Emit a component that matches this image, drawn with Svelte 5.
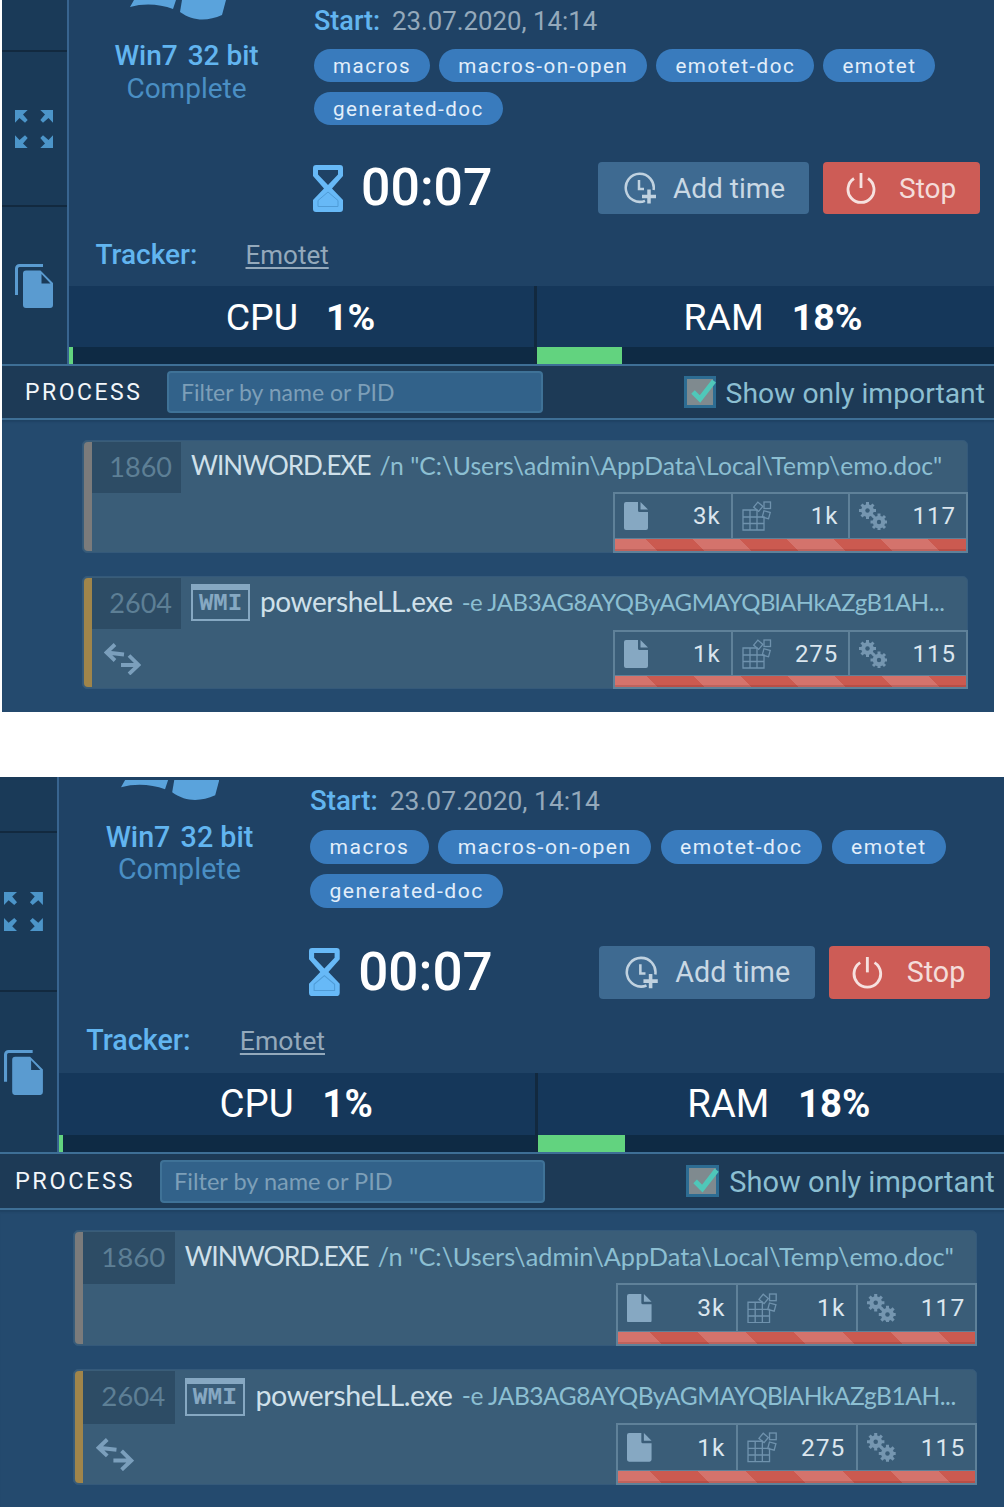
<script>
  const tags = ['macros', 'macros-on-open', 'emotet-doc', 'emotet', 'generated-doc'];
  const procs = [
    { pid: '1860', cls: 'grey', name: 'WINWORD.EXE', args: '/n "C:\\Users\\admin\\AppData\\Local\\Temp\\emo.doc"', wmi: false, net: false, stats: ['3k', '1k', '117'] },
    { pid: '2604', cls: 'gold', name: 'powersheLL.exe', args: '-e JAB3AG8AYQByAGMAYQBlAHkAZgB1AH...', wmi: true, net: true, stats: ['1k', '275', '115'] }
  ];
</script>

{#snippet gears()}
  <svg class="ic-gear" viewBox="0 0 28 28" aria-hidden="true">
    <g fill="#7596b0">
      <circle cx="8.500" cy="8.500" r="6.300"/>
      <circle cx="20" cy="20" r="6.300"/>
      <g stroke="#7596b0" stroke-width="3">
        <path d="M8.500 0v17M0 8.500h17M2.500 2.500l12 12M14.500 2.500l-12 12"/>
        <path d="M20 11.500v16.500M11.500 20h16.500M14 14l12 12M26 14l-12 12"/>
      </g>
    </g>
    <circle cx="8.500" cy="8.500" r="2.200" fill="#3a5d78"/>
    <circle cx="20" cy="20" r="2.200" fill="#3a5d78"/>
  </svg>
{/snippet}

{#snippet registry()}
  <svg class="ic-reg" viewBox="0 0 30 30" fill="none" stroke="#6f92ad" stroke-width="1.300" aria-hidden="true">
    <path d="M1 9h14v7h7v13H1zM1 16h14M1 22.500h21M8 9v20M15 16v13"/>
    <rect x="13" y="2.500" width="6.500" height="6.500" transform="rotate(40 16.250 5.750)"/>
    <rect x="22" y="1" width="6.500" height="6.500"/>
    <rect x="21" y="10.500" width="6.500" height="6.500" transform="rotate(15 24.250 13.750)"/>
  </svg>
{/snippet}

{#snippet panel(variant)}
  <section class="panel {variant}">
    <div class="upper">
      <aside class="side">
        <div class="s1"></div>
        <div class="s2">
          <svg class="ic-expand" viewBox="0 0 38 38" aria-hidden="true">
            <g fill="#4c95c9">
              <path d="M0 0h12.700L8 4.500l4.700 5.500-2.700 2.700L4.500 8 0 12.700z"/>
              <path d="M38 0H25.300L30 4.500 25.300 10l2.700 2.700L33.500 8l4.500 4.700z"/>
              <path d="M0 38h12.700L8 33.500l4.700-5.500-2.700-2.700L4.500 30 0 25.300z"/>
              <path d="M38 38H25.300l4.700-4.500-4.700-5.500 2.700-2.700 5.500 4.700 4.500-4.700z"/>
            </g>
          </svg>
        </div>
        <div class="s3">
          <svg class="ic-copy" viewBox="0 0 38 44" aria-hidden="true">
            <path d="M1.500 31V4.500a3 3 0 0 1 3-3H28" fill="none" stroke="#5a9bd0" stroke-width="3"/>
            <path d="M11 6.500h14.500L38 19v22a3 3 0 0 1-3 3H11a3 3 0 0 1-3-3V9.500a3 3 0 0 1 3-3z" fill="#5a9bd0"/>
            <path d="M26.500 10v9.500h9z" fill="#1a3a58"/>
          </svg>
        </div>
      </aside>
      <div class="main">
        <div class="info">
          <div class="summary">
            <div class="os">
              <svg class="logo" viewBox="0 0 96 21" aria-hidden="true">
                <path d="M4 0h42l-3 9C30 4 14 3 0 7z" fill="#5aa3dc"/>
                <path d="M52 0h44l-4 15c-14 6-28 7-42-3z" fill="#5aa3dc"/>
              </svg>
              <div class="os-name">Win7<span class="gap"></span> 32 bit</div>
              <div class="os-state">Complete</div>
            </div>
            <div class="run">
              <div class="start"><b>Start:</b> <span>23.07.2020, 14:14</span></div>
              <div class="tags">
                {#each tags as t}<span class="tag">{t}</span>{/each}
              </div>
              <div class="timer-row">
                <svg class="hourglass" viewBox="0 0 30 47" aria-hidden="true">
                  <path fill-rule="evenodd" fill="#67b9f7" d="M3 0h24a3 3 0 0 1 3 3v8L19 23.500 30 35v9a3 3 0 0 1-3 3H3a3 3 0 0 1-3-3v-9l11-11.500L0 11V3a3 3 0 0 1 3-3zM5 5v4.500L15 20l10-10.500V5z"/>
                  <path d="M5 41.500v-6L15 27l10 8.500v6z" fill="none" stroke="#4f9bd6" stroke-width="1"/>
                </svg>
                <div class="clock">00:07</div>
                <button class="btn add">
                  <svg class="ic-btn" viewBox="0 0 32 32" aria-hidden="true" fill="none" stroke="#c0d2e0">
                    <path d="M21 28.800A14 14 0 1 1 29.600 18" stroke-width="2.500"/>
                    <path d="M15 8v9h5" stroke-width="2.500"/>
                    <path d="M25 17.500v14M18 24.500h14" stroke-width="3.500"/>
                  </svg>
                  <span>Add time</span>
                </button>
                <button class="btn stop">
                  <svg class="ic-btn" viewBox="0 0 30 32" aria-hidden="true" fill="none" stroke="#f6e1df" stroke-width="2.800">
                    <path d="M8 6.500a13 13 0 1 0 14 0"/>
                    <path d="M15 1v15"/>
                  </svg>
                  <span>Stop</span>
                </button>
              </div>
            </div>
          </div>
          <div class="tracker"><b>Tracker:</b> <a href="#emotet">Emotet</a></div>
        </div>
        <div class="metrics">
          <div class="metric cpu">
            <div class="m-text">CPU <b>1%</b></div>
            <div class="m-bar"><i style="width:0.9%"></i></div>
          </div>
          <div class="metric ram">
            <div class="m-text">RAM <b>18%</b></div>
            <div class="m-bar"><i style="width:18.600%"></i></div>
          </div>
        </div>
      </div>
    </div>
    <div class="filter">
      <div class="f-title">PROCESS</div>
      <input class="f-input" placeholder="Filter by name or PID" />
      <label class="f-check">
        <span class="box">
          <svg viewBox="0 0 30 30" aria-hidden="true"><path d="M6 16l7 7L27 5" fill="none" stroke="#4fc7b9" stroke-width="5"/></svg>
        </span>
        <span class="f-label">Show only important</span>
      </label>
    </div>
    <div class="list">
      {#each procs as p}
        <article class="proc {p.cls}">
          <div class="stripe"></div>
          <div class="p-body">
            <div class="p-top">
              <div class="pid">{p.pid}</div>
              <div class="cmd">
                {#if p.wmi}<span class="wmi">WMI</span>{/if}
                <span class="p-name">{p.name}</span>
                <span class="p-args">{p.args}</span>
              </div>
            </div>
            <div class="p-bottom">
              <div class="p-flags">
                {#if p.net}
                  <svg class="ic-net" viewBox="0 0 37 32" fill="none" stroke="#7b9fbc" stroke-width="3.800" aria-hidden="true">
                    <path d="M11 1.500L2.500 9.500l8.500 8M2.500 9.500L20 11.500"/>
                    <path d="M25 12.500l9.500 9.500-9.500 9M34.500 22H17"/>
                  </svg>
                {/if}
              </div>
              <div class="stats">
                <div class="cells">
                  <div class="cell">
                    <svg class="ic-doc" viewBox="0 0 24 28" aria-hidden="true">
                      <path d="M2 0h12v8.500a1.500 1.500 0 0 0 1.500 1.500H24v16a2 2 0 0 1-2 2H2a2 2 0 0 1-2-2V2a2 2 0 0 1 2-2z" fill="#86a8c2"/>
                      <path d="M16.500 0L24 7.500h-7.500z" fill="#86a8c2"/>
                    </svg>
                    <span>{p.stats[0]}</span>
                  </div>
                  <div class="cell">{@render registry()}<span>{p.stats[1]}</span></div>
                  <div class="cell">{@render gears()}<span>{p.stats[2]}</span></div>
                </div>
                <div class="meter"></div>
              </div>
            </div>
          </div>
        </article>
      {/each}
    </div>
  </section>
{/snippet}

<div class="page">
  {@render panel('a')}
  {@render panel('b')}
</div>

<style>
  :global(body) { margin: 0; background: #fff; }
  .page { width: 1008px; height: 1508px; overflow: hidden; font-family: Roboto, "Liberation Sans", sans-serif; }
  .panel { display: flex; flex-direction: column; background: #244a6e; overflow: hidden; }
  .panel.a { --t: 0px; --side: 65px; --title: 165px; --title-pad: 23px; --list-pad: 80px; --stats: 355px; width: 992px; height: 712px; margin-left: 2px; }
  .panel.b { --t: 2.600px; --side: 55.800px; --title: 156px; --title-pad: 14.600px; --list-pad: 71.500px; --stats: 353px; width: 980.500px; height: 712.900px; margin-top: 63.500px; zoom: 1.024; }

  .upper { display: flex; height: calc(364px + var(--t)); flex: none; }
  .side { width: var(--side); flex: none; background: #1a3a58; display: flex; flex-direction: column; box-sizing: border-box; }
  .s1 { height: calc(52px + var(--t)); border-bottom: 2px solid #12293f; box-sizing: border-box; }
  .s2 { height: 155px; border-bottom: 2px solid #12293f; box-sizing: border-box; display: flex; justify-content: flex-end; padding: 58px 14px 0 0; }
  .s3 { flex: 1; display: flex; justify-content: flex-end; padding: 57px 14px 0 0; }
  .ic-expand { width: 38px; height: 38px; }
  .ic-copy { width: 38px; height: 44px; }

  .main { flex: 1; border-left: 2px solid #38648f; display: flex; flex-direction: column; min-width: 0; }
  .info { height: calc(286px + var(--t)); background: #1f4265; padding-top: var(--t); box-sizing: border-box; display: flex; flex-direction: column; }
  .summary { display: flex; height: 232px; }
  .os { width: 245px; flex: none; box-sizing: border-box; padding-right: 10px; display: flex; flex-direction: column; align-items: center; }
  .logo { width: 96px; height: 21px; margin-left: -18px; flex: none; }
  .os-name { margin-top: 19px; font-size: 28px; line-height: 32px; font-weight: 500; color: #62b5f0; white-space: nowrap; }
  .gap { display: inline-block; width: 3px; }
  .os-state { font-size: 28px; line-height: 33px; color: #4a8fc4; }

  .run { flex: 1; padding-right: 14px; min-width: 0; }
  .start { height: 38px; padding-top: 4px; box-sizing: border-box; font-size: 27px; line-height: 34px; white-space: nowrap; }
  .start b { font-weight: 500; color: #62b5f0; }
  .start span { color: #94a9bb; font-size: 25.800px; margin-left: 5px; }
  .tags { display: flex; flex-wrap: wrap; gap: 10px 9.300px; margin-top: 11px; }
  .tag { height: 33px; line-height: 34px; padding: 0 19px; border-radius: 17px; background: #397bbd; color: #e2eefa; font-size: 20.600px; letter-spacing: 1.470px; white-space: nowrap; }
  .timer-row { display: flex; align-items: center; height: 52px; margin-top: 37px; }
  .hourglass { width: 30px; height: 47px; flex: none; margin-left: -1px; }
  .clock { flex: 1; margin-left: 18px; font-size: 51.800px; line-height: 52px; font-weight: 500; color: #fff; }
  .btn { height: 52px; border: 0; border-radius: 4px; padding: 0; display: flex; align-items: center; font-family: inherit; font-size: 28px; box-sizing: border-box; }
  .add { width: 211px; background: #3e6a91; color: #c9d8e4; padding-left: 26px; gap: 17px; }
  .stop { width: 157px; margin-left: 14px; background: #cd5c56; color: #f4dcda; padding-left: 23px; gap: 23px; }
  .ic-btn { width: 32px; height: 32px; flex: none; }
  .stop .ic-btn { width: 30px; }

  .tracker { padding: 1px 0 0 26.500px; display: flex; align-items: baseline; height: 53px; line-height: 44px; }
  .tracker b { font-weight: 500; font-size: 28px; color: #62b5f0; width: 150px; }
  .tracker a { font-size: 26px; color: #94a9bb; text-decoration: underline; text-underline-offset: 3px; }

  .metrics { flex: 1; display: flex; background: #15375a; }
  .metric { display: flex; flex-direction: column; }
  .cpu { width: 465px; border-right: 3px solid #12293f; }
  .ram { flex: 1; }
  .m-text { flex: 1; display: flex; align-items: center; justify-content: center; gap: 28px; color: #fff; font-size: 37.500px; }
  .m-text b { font-weight: 700; }
  .cpu .m-text { padding-right: 2px; }
  .ram .m-text { padding-left: 15px; }
  .m-bar { height: 17px; background: #0e2a44; flex: none; }
  .m-bar i { display: block; height: 100%; background: #62d37f; }
  .cpu .m-bar i { width: 4px !important; }

  .filter { height: 56px; flex: none; box-sizing: border-box; background: #1d3a56; border-top: 2px solid #3e6f96; border-bottom: 2px solid #3e6f96; display: flex; align-items: center; }
  .f-title { width: var(--title); flex: none; box-sizing: border-box; padding-left: var(--title-pad); font-size: 23px; letter-spacing: 2.500px; color: #f2f6fa; }
  .f-input { width: 376px; height: 42px; box-sizing: border-box; background: #32628a; border: 2px solid #3f7297; border-radius: 4px; padding: 0 12px; font-family: Lato, "Noto Sans", sans-serif; font-size: 23px; color: #7d9fb8; outline: none; }
  .f-input::placeholder { color: #7d9fb8; opacity: 1; }
  .f-check { margin-left: auto; padding-right: 9px; display: flex; align-items: center; gap: 10px; color: #8cbfd2; font-size: 28.300px; white-space: nowrap; }
  .f-label { padding-top: 2px; }
  .box { width: 32px; height: 32px; box-sizing: border-box; background: #7f8a8f; border: 3px solid #2d6c92; position: relative; }
  .box svg { position: absolute; left: 0; top: -3px; width: 30px; height: 30px; }

  .list { flex: 1; padding: 20px 26px 0 var(--list-pad); display: flex; flex-direction: column; gap: 23px; box-shadow: inset 0 3px 2px -1px #1f4263; }
  .proc { height: 113px; flex: none; display: flex; box-sizing: border-box; background: #3a5d78; border: 1px solid #34597a; border-radius: 5px; padding: 1px 0 0 1px; }
  .stripe { width: 8px; flex: none; border-radius: 4px 0 0 4px; margin-bottom: 1px; }
  .grey .stripe { background: #7b7b7b; }
  .gold .stripe { background: #a0854a; }
  .p-body { flex: 1; min-width: 0; display: flex; flex-direction: column; }
  .p-top { display: flex; height: 50px; flex: none; }
  .a .gold .p-top { height: 52px; }
  .pid { width: 89px; height: 51px; flex: none; box-sizing: border-box; background: #2d4c65; color: #5d7f95; font-family: Lato, "Noto Sans", sans-serif; font-size: 27px; line-height: 49px; text-align: right; padding-right: 9px; }
  .cmd { margin-left: 10px; display: flex; align-items: center; height: 46px; white-space: nowrap; font-family: Lato, "Noto Sans", sans-serif; }
  .p-name { font-size: 28px; color: #cfe0ea; margin-right: 9px; }
  .grey .p-name { font-size: 26px; letter-spacing: -0.950px; }
  .gold .p-name { letter-spacing: -0.400px; }
  .p-args { font-size: 24.700px; color: #8cbfd2; }
  .gold .p-args { font-size: 24px; letter-spacing: -0.450px; }
  .wmi { width: 59px; height: 37px; margin: 3px 10px 0 0; box-sizing: border-box; border: 2px solid #86a8c2; border-top-width: 6px; font-family: "Liberation Mono", monospace; font-weight: 700; font-size: 24px; line-height: 27px; text-align: center; color: #86a8c2; flex: none; }
  .p-bottom { flex: 1; display: flex; justify-content: space-between; }
  .p-flags { padding: 15px 0 0 12px; }
  .a .gold .p-flags { padding-top: 13px; }
  .ic-net { width: 37px; height: 32px; display: block; }
  .stats { width: var(--stats); box-sizing: border-box; border: 2px solid #5f8199; display: flex; flex-direction: column; margin: 0 -1px -1px 0; }
  .cells { display: flex; height: 45px; flex: none; border-bottom: 1px solid #5f8199; box-sizing: border-box; }
  .a .gold .cells { height: 44px; }
  .cell { flex: 1; display: flex; align-items: center; justify-content: space-between; padding: 0 10px 0 9px; color: #dbe6ee; font-size: 24px; letter-spacing: 1px; box-sizing: border-box; }
  .cell + .cell { border-left: 2px solid #5f8199; }
  .ic-doc { width: 24px; height: 28px; }
  .ic-reg { width: 30px; height: 30px; }
  .ic-gear { width: 28px; height: 28px; }
  .meter { flex: 1; background: repeating-linear-gradient(45deg, #d4736c 0 30px, #cb5a50 30px 63.300px, #d4736c 63.300px 66.500px); box-shadow: inset 0 -2px rgba(100, 30, 30, 0.18); }
</style>
